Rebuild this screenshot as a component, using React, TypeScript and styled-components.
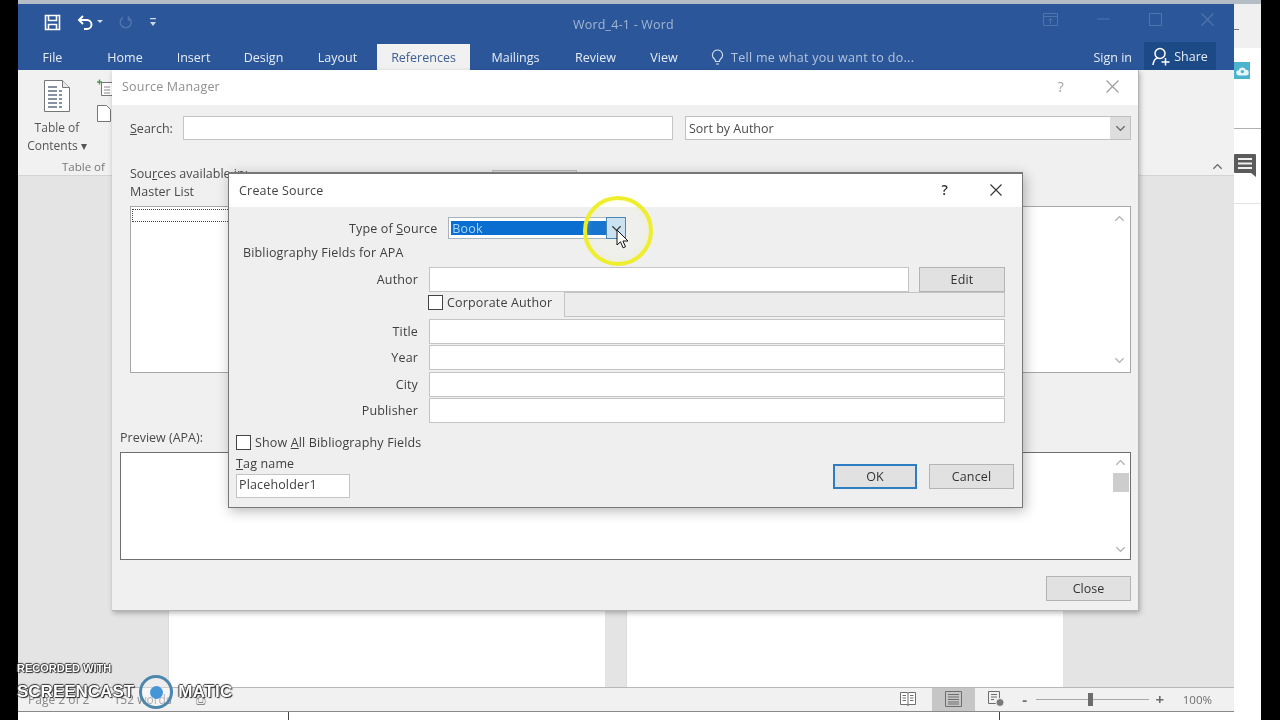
import styled, { createGlobalStyle } from 'styled-components';

const Global = createGlobalStyle`
  html, body { margin: 0; padding: 0; background: #000; }
  body { font-family: "Open Sans", "Noto Sans", sans-serif; font-size: 12.5px; color: #3a3a3a; overflow: hidden; }
`;

const Stage = styled.div`
  position: relative;
  width: 1280px;
  height: 720px;
  display: flex;
  background: #000;
  overflow: hidden;
  filter: blur(0.35px);
`;

const Screen = styled.div`
  margin-left: 18px;
  width: 1243px;
  height: 720px;
  display: flex;
  flex-direction: column;
`;

const TopEdge = styled.div`
  height: 4px;
  flex: none;
  background: #b4bcc6;
`;

const Desk = styled.div`
  flex: 1;
  display: flex;
  min-height: 0;
`;

const WordWindow = styled.div`
  width: 1216px;
  display: flex;
  flex-direction: column;
  background: #e4e4e4;
`;

const TitleBar = styled.div`
  height: 36px;
  flex: none;
  background: #2b579a;
  display: flex;
  align-items: center;
  padding: 0 0 0 26px;
  color: #a3b6d3;
`;

const Qat = styled.div`
  width: 529px;
  display: flex;
  align-items: center;
  gap: 16px;
`;

const DocTitle = styled.div`
  font-size: 12.5px;
  letter-spacing: 0.2px;
  width: 106px;
  white-space: nowrap;
  margin-top: 4px;
`;

const WinButtons = styled.div`
  margin-left: auto;
  display: flex;
  align-items: center;
  gap: 39px;
  padding-right: 20px;
  color: #4f74ac;
  margin-top: -6px;
`;

const TabBar = styled.div`
  height: 30px;
  flex: none;
  background: #2b579a;
  display: flex;
  align-items: flex-end;
  padding-left: 24px;
  color: #e6ecf5;
  font-size: 12.5px;
`;

const Tab = styled.div<{ $active?: boolean; $w: number; $gap?: number }>`
  width: ${p => p.$w}px;
  margin-left: ${p => p.$gap ?? 0}px;
  height: 26px;
  flex: none;
  display: flex;
  align-items: center;
  justify-content: center;
  white-space: nowrap;
  background: ${p => (p.$active ? '#f1f1f1' : 'transparent')};
  color: ${p => (p.$active ? '#3d5f94' : 'inherit')};
`;

const TellMe = styled.div`
  height: 26px;
  display: flex;
  align-items: center;
  gap: 7px;
  margin-left: 32px;
  color: #b4c4dc;
  letter-spacing: 0.3px;
  white-space: nowrap;
`;

const SignIn = styled.div`
  height: 26px;
  display: flex;
  align-items: center;
  margin-left: auto;
  white-space: nowrap;
`;

const ShareButton = styled.div`
  width: 72px;
  height: 28px;
  margin: 0 18px 0 12px;
  display: flex;
  align-items: center;
  justify-content: center;
  gap: 4px;
  background: #1c4a87;
  white-space: nowrap;
`;

const Ribbon = styled.div`
  height: 106px;
  flex: none;
  background: #f1f1f1;
  border-bottom: 1px solid #d4d4d4;
  display: flex;
  box-sizing: border-box;
`;

const RibbonGroup = styled.div`
  width: 94px;
  flex: none;
  display: flex;
  color: #555;
  font-size: 12px;
`;

const TocBlock = styled.div`
  width: 79px;
  flex: none;
`;

const TocColumn = styled.div`
  width: 78px;
  display: flex;
  flex-direction: column;
  align-items: center;
  padding-top: 10px;
  line-height: 18px;
  text-align: center;
  white-space: nowrap;
`;

const TocLabel = styled.div`
  margin-top: 7px;
`;

const GroupName = styled.div`
  margin: 4px 0 0 44px;
  color: #777;
  font-size: 11.5px;
  white-space: nowrap;
`;

const SmallIcons = styled.div`
  display: flex;
  flex-direction: column;
  gap: 9px;
  padding-top: 9px;
`;

const Collapse = styled.div`
  margin: auto 11px 3px auto;
  color: #666;
  display: flex;
`;

const DocArea = styled.div`
  flex: 1;
  display: flex;
  gap: 21px;
  padding-left: 150px;
  min-height: 0;
`;

const Page = styled.div`
  width: 437px;
  background: #fff;
  border-left: 1px solid #dcdcdc;
  box-sizing: border-box;
`;

const StatusBar = styled.div`
  height: 25px;
  flex: none;
  background: #f1f1f1;
  border-top: 1px solid #b8b8b8;
  border-bottom: 1px solid #8a8a8a;
  display: flex;
  align-items: center;
  padding-left: 10px;
  color: #888;
  font-size: 12px;
  box-sizing: border-box;
`;

const StatusText = styled.div`
  display: flex;
  gap: 24px;
  white-space: nowrap;
  margin-top: -1px;
`;

const ViewButtons = styled.div`
  margin-left: auto;
  display: flex;
  align-items: stretch;
  height: 100%;
  color: #6e6e6e;
`;

const ViewButton = styled.div<{ $on?: boolean; $w: number }>`
  width: ${p => p.$w}px;
  display: flex;
  align-items: center;
  justify-content: center;
  padding-bottom: 1px;
  box-sizing: border-box;
  background: ${p => (p.$on ? '#c6c6c6' : 'transparent')};
`;

const Zoom = styled.div`
  display: flex;
  align-items: center;
  gap: 6px;
  margin: -1px 22px 0 2px;
  color: #6e6e6e;
`;

const ZoomTrack = styled.div`
  position: relative;
  width: 113px;
  height: 1px;
  background: #a8a8a8;
`;

const ZoomThumb = styled.div`
  position: absolute;
  left: 52px;
  top: -6px;
  width: 5px;
  height: 13px;
  background: #6c6c6c;
`;

const ZoomSign = styled.span`
  font-size: 15px;
  font-weight: 700;
  width: 10px;
  text-align: center;
`;

const ZoomValue = styled.span`
  margin-left: 12px;
  font-size: 11.5px;
`;

const BottomStrip = styled.div`
  height: 8px;
  flex: none;
  background: #fff;
  padding-left: 270px;
`;

const PageEdge = styled.div`
  width: 712px;
  height: 100%;
  box-sizing: border-box;
  border-left: 1px solid #444;
  border-right: 1px solid #444;
`;

const RightStrip = styled.div`
  flex: 1;
  background: #fff;
  display: flex;
  flex-direction: column;
`;

const RightTop = styled.div`
  height: 44px;
  flex: none;
  background: #f0f0f0;
  display: flex;
  align-items: center;
  padding-top: 6px;
  box-sizing: border-box;
  color: #777;
`;

const Dash = styled.div`
  width: 5px;
  height: 1px;
  background: #777;
`;

const CloudBadge = styled.div`
  width: 16px;
  height: 17px;
  flex: none;
  margin-top: 14px;
  background: #4cb3cf;
  display: flex;
  align-items: center;
  justify-content: center;
`;

const RightRule = styled.div`
  height: 1px;
  flex: none;
  margin-top: 49px;
  background: #b0b0b0;
`;

const CommentIcon = styled.div`
  margin-top: 25px;
  height: 49px;
  flex: none;
  border-bottom: 1px solid #e2e2e2;
`;

/* windows lying over the document */
const SourceManager = styled.div`
  position: absolute;
  left: 112px;
  top: 70px;
  width: 1027px;
  height: 541px;
  box-sizing: border-box;
  background: #f0f0f0;
  border-right: 1px solid #b5b5b5;
  border-bottom: 1px solid #b5b5b5;
  box-shadow: 1px 2px 5px rgba(0, 0, 0, 0.28);
  display: flex;
  flex-direction: column;
`;

const DialogTitle = styled.div<{ $h: number; $lift?: number; $dim?: boolean }>`
  height: ${p => p.$h}px;
  flex: none;
  box-sizing: border-box;
  background: #fff;
  display: flex;
  align-items: center;
  padding: 0 0 ${p => p.$lift ?? 0}px 10px;
  color: ${p => (p.$dim ? '#8f8f8f' : '#444')};
  letter-spacing: 0.2px;
`;

const TitleActions = styled.div<{ $dim?: boolean }>`
  margin: ${p => (p.$dim ? '0' : '-2px')} 0 0 auto;
  display: flex;
  align-items: center;
  gap: 42px;
  padding-right: ${p => (p.$dim ? 19 : 20)}px;
  color: ${p => (p.$dim ? '#a0a0a0' : '#333')};
  font-size: 14px;
  font-weight: ${p => (p.$dim ? 400 : 600)};
`;

const SmBody = styled.div`
  flex: 1;
  display: flex;
  flex-direction: column;
  padding: 11px 7px 9px 8px;
  color: #4a4a4a;
`;

const SearchRow = styled.div`
  display: flex;
  align-items: center;
  padding-left: 10px;
  height: 24px;
`;

const SearchLabel = styled.div`
  width: 53px;
  flex: none;
`;

const TextBox = styled.div<{ $w?: number; $h?: number; $muted?: boolean }>`
  width: ${p => (p.$w ? `${p.$w}px` : 'auto')};
  height: ${p => p.$h ?? 25}px;
  flex: ${p => (p.$w ? 'none' : 1)};
  box-sizing: border-box;
  background: ${p => (p.$muted ? '#ececec' : '#fff')};
  border: 1px solid #c4c4c4;
  display: flex;
  align-items: center;
  padding-left: 2px;
  overflow: hidden;
  white-space: nowrap;
`;

const SortSelect = styled.div`
  width: 446px;
  height: 24px;
  margin-left: 12px;
  flex: none;
  box-sizing: border-box;
  background: #fff;
  border: 1px solid #c0c0c0;
  display: flex;
  align-items: center;
  justify-content: space-between;
  padding-left: 3px;
`;

const SelectArrow = styled.div`
  width: 20px;
  height: 100%;
  background: #dedede;
  display: flex;
  align-items: center;
  justify-content: center;
  color: #666;
`;

const SourcesRow = styled.div`
  display: flex;
  margin-top: 25px;
  padding-left: 10px;
  height: 41px;
`;

const SourcesLabels = styled.div`
  width: 362px;
  line-height: 18px;
  flex: none;
`;

const HiddenButton = styled.div`
  width: 85px;
  height: 22px;
  margin-top: 5px;
  background: #dedede;
  border: 1px solid #bcbcbc;
  box-sizing: border-box;
`;

const ListBox = styled.div`
  height: 167px;
  margin-left: 10px;
  box-sizing: border-box;
  background: #fff;
  border: 1px solid #a8a8a8;
  padding: 2px 1px;
  display: flex;
  justify-content: space-between;
`;

const ListItem = styled.div`
  width: 110px;
  height: 13px;
  box-sizing: border-box;
  border: 1px dotted #444;
`;

const ScrollColumn = styled.div<{ $w: number; $pad: number }>`
  width: ${p => p.$w}px;
  flex: none;
  display: flex;
  flex-direction: column;
  align-items: center;
  padding: ${p => p.$pad}px 0;
  color: #b0b0b0;
`;

const ScrollThumb = styled.div`
  width: 16px;
  height: 19px;
  margin-top: 5px;
  background: #cdcdcd;
`;

const ScrollFill = styled.div`
  flex: 1;
`;

const PreviewLabel = styled.div`
  margin-top: 56px;
  height: 23px;
`;

const PreviewBox = styled.div`
  height: 108px;
  box-sizing: border-box;
  background: #fff;
  border: 1px solid #6f6f6f;
  display: flex;
  justify-content: flex-end;
`;

const CloseRow = styled.div`
  margin-top: auto;
  display: flex;
  justify-content: flex-end;
`;

const Button = styled.div<{ $w: number; $h?: number; $primary?: boolean }>`
  width: ${p => p.$w}px;
  height: ${p => p.$h ?? 25}px;
  flex: none;
  box-sizing: border-box;
  background: #e1e1e1;
  border: ${p => (p.$primary ? '2px solid #2d7dc2' : '1px solid #b4b4b4')};
  display: flex;
  align-items: center;
  justify-content: center;
  color: #333;
`;

const CreateSource = styled.div`
  position: absolute;
  left: 228px;
  top: 172px;
  width: 795px;
  height: 336px;
  box-sizing: border-box;
  background: #efefef;
  border: 1px solid #777;
  border-top-width: 2px;
  box-shadow: 2px 3px 12px rgba(0, 0, 0, 0.28);
  display: flex;
  flex-direction: column;
  color: #3f3f3f;
  letter-spacing: 0.15px;
`;

const TypeRow = styled.div`
  height: 22px;
  margin-top: 10px;
  display: flex;
  align-items: center;
  padding-left: 120px;
`;

const TypeLabel = styled.div`
  margin-right: 11px;
`;

const TypeSelect = styled.div`
  width: 178px;
  height: 22px;
  box-sizing: border-box;
  background: #fff;
  border: 1px solid #a9b3bd;
  display: flex;
  align-items: center;
  padding-left: 2px;
`;

const TypeValue = styled.div`
  flex: 1;
  height: 14px;
  background: #0a6ed1;
  color: #a9d6f5;
  display: flex;
  align-items: center;
  padding-left: 1px;
`;

const TypeArrow = styled.div`
  width: 20px;
  height: 22px;
  flex: none;
  margin-right: -1px;
  box-sizing: border-box;
  background: #c9e2f5;
  border: 1px solid #3d82b8;
  display: flex;
  align-items: center;
  justify-content: center;
  color: #333;
`;

const FieldsTitle = styled.div`
  margin: 5px 0 0 14px;
  height: 23px;
  line-height: 18px;
`;

const FieldsGrid = styled.div`
  display: grid;
  grid-template-columns: 187px 480px 10px 86px;
  grid-auto-rows: 24px;
  row-gap: 2.3px;
  margin-left: 13px;
  width: 763px;
  padding-bottom: 6px;
  align-items: center;
`;

const FieldLabel = styled.div`
  text-align: right;
  padding-right: 11px;
`;

const WideCell = styled.div`
  grid-column: 2 / 5;
  display: flex;
  align-items: center;
`;

const CorporateRow = styled(WideCell)`
  height: 24px;
  margin-top: -2px;
`;

const Checkbox = styled.div`
  width: 15px;
  height: 15px;
  flex: none;
  box-sizing: border-box;
  background: #fff;
  border: 1px solid #444;
`;

const CheckText = styled.div`
  margin-left: 4px;
  white-space: nowrap;
`;

const CorporateCheck = styled(Checkbox)`
  margin: -3px 0 0 -1px;
`;

const CorporateText = styled(CheckText)`
  width: 117px;
  flex: none;
  margin-top: -3px;
`;

const ShowAllRow = styled.div`
  display: flex;
  align-items: center;
  margin: 6px 0 0 7px;
  height: 16px;
`;

const DialogFoot = styled.div`
  display: flex;
  margin: 5px 8px 0 7px;
`;

const TagColumn = styled.div`
  width: 114px;
  line-height: 18px;
  flex: none;
`;

const TagBox = styled(TextBox)`
  margin-top: 1px;
  padding-bottom: 2px;
`;

const FootButtons = styled.div`
  margin-left: auto;
  display: flex;
  gap: 12px;
  padding-top: 9px;
`;

const Highlight = styled.div`
  position: absolute;
  left: 583px;
  top: 196px;
  width: 70px;
  height: 70px;
  box-sizing: border-box;
  border-radius: 50%;
  border: 4px solid #eeee2c;
  background: rgba(250, 250, 170, 0.05);
  box-shadow: inset 0 0 5px rgba(245, 245, 120, 0.3);
  pointer-events: none;
`;

const Pointer = styled.svg`
  position: absolute;
  left: 616px;
  top: 229px;
`;

const Watermark = styled.div`
  position: absolute;
  left: 17px;
  top: 660px;
  color: #fff;
  font-family: "Liberation Sans", sans-serif;
  font-weight: 700;
  text-shadow: 1px 1px 1px #222, -1px 0 1px #333, 0 -1px 1px #333;
`;

const WatermarkSmall = styled.div`
  font-size: 11px;
  line-height: 16px;
`;

const WatermarkBig = styled.div`
  display: flex;
  align-items: center;
  font-size: 17px;
  height: 34px;
  margin-top: -1px;
`;

const RecordDot = styled.div`
  width: 34px;
  height: 34px;
  box-sizing: border-box;
  margin: 0 5px 0 5px;
  border-radius: 50%;
  border: 3px solid #4d86ad;
  background: rgba(255, 255, 255, 0.35);
  display: flex;
  align-items: center;
  justify-content: center;
`;

const RecordCore = styled.div`
  width: 13px;
  height: 13px;
  border-radius: 50%;
  background: #4596d8;
`;

const MaticText = styled.span`
  letter-spacing: 0.4px;
`;

const Chevron = ({ up, size = 11 }: { up?: boolean; size?: number }) => (
  <svg width={size} height={size} viewBox="0 0 12 12" fill="none" stroke="currentColor" strokeWidth="1.4">
    <path d={up ? 'M1.5 8.5 6 4l4.5 4.5' : 'M1.5 3.5 6 8l4.5-4.5'} />
  </svg>
);

const CrossIcon = ({ size = 12 }: { size?: number }) => (
  <svg width={size} height={size} viewBox="0 0 12 12" fill="none" stroke="currentColor" strokeWidth="1.1">
    <path d="M.5.5l11 11M11.5.5l-11 11" />
  </svg>
);

const SaveIcon = () => (
  <svg width="17" height="17" viewBox="0 0 17 17" fill="none" stroke="#fff" strokeWidth="1.6">
    <path d="M1.5 1.5h14v14h-14z" />
    <path d="M4.5 1.5v5h8v-5M4.5 15.5v-5h8v5" />
  </svg>
);

const UndoIcon = () => (
  <svg width="26" height="16" viewBox="0 0 26 16" fill="none">
    <path d="M6 2 2 6l4 4" stroke="#fff" strokeWidth="1.9" />
    <path d="M2.5 6H10a4.3 4.3 0 0 1 0 9H7" stroke="#fff" strokeWidth="1.9" />
    <path d="M20 6h6l-3 3z" fill="#d5deec" />
  </svg>
);

const RedoIcon = () => (
  <svg width="14" height="15" viewBox="0 0 14 15" fill="none" stroke="#4f74ac" strokeWidth="1.5">
    <path d="M9.5 2.5a5.5 5.5 0 1 1-5.5 0M9.5 1v4h3" />
  </svg>
);

const CustomizeIcon = () => (
  <svg width="8" height="10" viewBox="0 0 8 10" fill="#cdd8e8">
    <path d="M1 1h6v1.3H1zM1 5h6L4 9z" />
  </svg>
);

const BulbIcon = () => (
  <svg width="13" height="17" viewBox="0 0 13 17" fill="none" stroke="#d5deec" strokeWidth="1.1">
    <path d="M6.5 1a5 5 0 0 0-3 9c.7.7 1 1.5 1 2.5h4c0-1 .3-1.8 1-2.5a5 5 0 0 0-3-9zM5 15h3" />
  </svg>
);

const ShareIcon = () => (
  <svg width="18" height="19" viewBox="0 0 18 19" fill="none" stroke="#fff" strokeWidth="1.5">
    <circle cx="8" cy="6.5" r="5" />
    <path d="M1 18c.5-4 2.5-6.6 5-7.2M13.5 11v7.5M9.5 15h8" />
  </svg>
);

const WindowGlyph = () => (
  <svg width="15" height="13" viewBox="0 0 15 13" fill="none" stroke="currentColor">
    <path d="M.5.5h14v12H.5zM.5 3.5h14M7.5 5.5v5M5.5 7.5l2-2 2 2" />
  </svg>
);

const MinGlyph = () => (
  <svg width="13" height="2" viewBox="0 0 13 2"><path d="M0 1h13" stroke="currentColor" /></svg>
);

const MaxGlyph = () => (
  <svg width="13" height="13" viewBox="0 0 13 13" fill="none" stroke="currentColor"><path d="M.5.5h12v12H.5z" /></svg>
);

const TocIcon = () => (
  <svg width="26" height="32" viewBox="0 0 26 32" fill="#fff" stroke="#777">
    <path d="M.5.5h18l7 7v24H.5z" />
    <path d="M18.5.5v7h7" fill="#e8e8e8" />
    <path d="M4 7h11M4 11h14M4 15h14M4 19h14M4 23h14M4 27h14" stroke="#5f6f86" strokeWidth="1.4" strokeDasharray="9 2 3 0" />
  </svg>
);

const AddTextIcon = () => (
  <svg width="16" height="17" viewBox="0 0 16 17" fill="#fff" stroke="#777">
    <path d="M4.5 3.5h11v13h-11z" />
    <path d="M0 3h5M2.5.5v5" stroke="#4e9a4e" strokeWidth="1.4" />
    <path d="M7 8h6M7 11h6M7 14h6" stroke="#888" />
  </svg>
);

const UpdateIcon = () => (
  <svg width="14" height="17" viewBox="0 0 14 17" fill="#fff" stroke="#777">
    <path d="M.5.5h9l4 4v12H.5z" />
  </svg>
);

const CloudIcon = () => (
  <svg width="13" height="10" viewBox="0 0 13 10" fill="#e8f6fa">
    <path d="M3 9.5a2.6 2.6 0 0 1-.3-5.2 3.7 3.7 0 0 1 7-.6 2.9 2.9 0 0 1 .3 5.8z" />
    <circle cx="6.4" cy="5.6" r="1.7" fill="#4cb3cf" />
  </svg>
);

const CommentGlyph = () => (
  <svg width="22" height="23" viewBox="0 0 22 23">
    <path d="M1 0h20a1 1 0 0 1 1 1v22l-5-4H1a1 1 0 0 1-1-1V1a1 1 0 0 1 1-1z" fill="#5b5b5b" />
    <path d="M4 5h14M4 9.5h14M4 14h14" stroke="#f0f0f0" strokeWidth="2" />
  </svg>
);

const ReadIcon = () => (
  <svg width="16" height="16" viewBox="0 0 16 16" fill="#fff" stroke="currentColor">
    <path d="M.5 1.5h7l.5.7.5-.7h7v12h-7l-.5.7-.5-.7h-7z" />
    <path d="M8 2v13M2.5 4.5h3.5M2.5 7h3.5M2.5 9.5h3.5M10 4.5h3.5M10 7h3.5M10 9.5h3.5" fill="none" />
  </svg>
);

const PrintIcon = () => (
  <svg width="17" height="16" viewBox="0 0 17 16" fill="none" stroke="currentColor">
    <path d="M.5.5h16v15H.5z" />
    <path d="M3 3.5h11M3 6h11M3 8.5h11M3 11h11M3 13h11" />
  </svg>
);

const WebIcon = () => (
  <svg width="17" height="16" viewBox="0 0 17 16" fill="none" stroke="currentColor">
    <path d="M.5.5h11v12H.5zM3 3.5h6M3 6h6M3 8.5h3" />
    <circle cx="12" cy="11.5" r="4" fill="#7a7a7a" stroke="#f1f1f1" />
  </svg>
);

const App = () => {
  return (
    <Stage>
      <Global />
      <Screen>
        <TopEdge />
        <Desk>
          <WordWindow>
            <TitleBar>
              <Qat>
                <SaveIcon />
                <UndoIcon />
                <RedoIcon />
                <CustomizeIcon />
              </Qat>
              <DocTitle>Word_4-1 - Word</DocTitle>
              <WinButtons>
                <WindowGlyph />
                <MinGlyph />
                <MaxGlyph />
                <CrossIcon size={13} />
              </WinButtons>
            </TitleBar>
            <TabBar>
              <Tab $w={21}>File</Tab>
              <Tab $w={38} $gap={43}>Home</Tab>
              <Tab $w={33} $gap={33}>Insert</Tab>
              <Tab $w={41} $gap={33}>Design</Tab>
              <Tab $w={41} $gap={33}>Layout</Tab>
              <Tab $w={93} $gap={19} $active>References</Tab>
              <Tab $w={51} $gap={20}>Mailings</Tab>
              <Tab $w={43} $gap={33}>Review</Tab>
              <Tab $w={30} $gap={32}>View</Tab>
              <TellMe>
                <BulbIcon />
                Tell me what you want to do...
              </TellMe>
              <SignIn>Sign in</SignIn>
              <ShareButton>
                <ShareIcon />
                Share
              </ShareButton>
            </TabBar>
            <Ribbon>
              <RibbonGroup>
                <TocBlock>
                  <TocColumn>
                    <TocIcon />
                    <TocLabel>
                      Table of
                      <br />
                      Contents ▾
                    </TocLabel>
                  </TocColumn>
                  <GroupName>Table of</GroupName>
                </TocBlock>
                <SmallIcons>
                  <AddTextIcon />
                  <UpdateIcon />
                </SmallIcons>
              </RibbonGroup>
              <Collapse>
                <Chevron up />
              </Collapse>
            </Ribbon>
            <DocArea>
              <Page />
              <Page />
            </DocArea>
            <StatusBar>
              <StatusText>
                <span>Page 2 of 2</span>
                <span>152 words</span>
                <span>⎙</span>
              </StatusText>
              <ViewButtons>
                <ViewButton $w={48}><ReadIcon /></ViewButton>
                <ViewButton $w={43} $on><PrintIcon /></ViewButton>
                <ViewButton $w={43}><WebIcon /></ViewButton>
                <Zoom>
                  <ZoomSign>-</ZoomSign>
                  <ZoomTrack><ZoomThumb /></ZoomTrack>
                  <ZoomSign>+</ZoomSign>
                  <ZoomValue>100%</ZoomValue>
                </Zoom>
              </ViewButtons>
            </StatusBar>
            <BottomStrip>
              <PageEdge />
            </BottomStrip>
          </WordWindow>
          <RightStrip>
            <RightTop><Dash /></RightTop>
            <CloudBadge><CloudIcon /></CloudBadge>
            <RightRule />
            <CommentIcon><CommentGlyph /></CommentIcon>
          </RightStrip>
        </Desk>
      </Screen>

      <SourceManager>
        <DialogTitle $h={35} $lift={2} $dim>
          Source Manager
          <TitleActions $dim>
            <span>?</span>
            <CrossIcon size={13} />
          </TitleActions>
        </DialogTitle>
        <SmBody>
          <SearchRow>
            <SearchLabel><u>S</u>earch:</SearchLabel>
            <TextBox $w={490} $h={24} />
            <SortSelect>
              Sort by Author
              <SelectArrow><Chevron /></SelectArrow>
            </SortSelect>
          </SearchRow>
          <SourcesRow>
            <SourcesLabels>
              Sou<u>r</u>ces available in:
              <br />
              Master List
            </SourcesLabels>
            <HiddenButton />
          </SourcesRow>
          <ListBox>
            <ListItem />
            <ScrollColumn $w={20} $pad={4}>
              <Chevron up />
              <ScrollFill />
              <Chevron />
            </ScrollColumn>
          </ListBox>
          <PreviewLabel>Preview (APA):</PreviewLabel>
          <PreviewBox>
            <ScrollColumn $w={19} $pad={4}>
              <Chevron up />
              <ScrollThumb />
              <ScrollFill />
              <Chevron />
            </ScrollColumn>
          </PreviewBox>
          <CloseRow>
            <Button $w={85}>Close</Button>
          </CloseRow>
        </SmBody>
      </SourceManager>

      <CreateSource>
        <DialogTitle $h={33}>
          Create Source
          <TitleActions>
            <span>?</span>
            <CrossIcon size={12} />
          </TitleActions>
        </DialogTitle>
        <TypeRow>
          <TypeLabel>Type of <u>S</u>ource</TypeLabel>
          <TypeSelect>
            <TypeValue>Book</TypeValue>
            <TypeArrow><Chevron /></TypeArrow>
          </TypeSelect>
        </TypeRow>
        <FieldsTitle>Bibliography Fields for APA</FieldsTitle>
        <FieldsGrid>
          <FieldLabel>Author</FieldLabel>
          <TextBox $w={480} />
          <span />
          <Button $w={86}>Edit</Button>
          <span />
          <CorporateRow>
            <CorporateCheck />
            <CorporateText>Corporate Author</CorporateText>
            <TextBox $muted />
          </CorporateRow>
          <FieldLabel>Title</FieldLabel>
          <WideCell><TextBox /></WideCell>
          <FieldLabel>Year</FieldLabel>
          <WideCell><TextBox /></WideCell>
          <FieldLabel>City</FieldLabel>
          <WideCell><TextBox /></WideCell>
          <FieldLabel>Publisher</FieldLabel>
          <WideCell><TextBox /></WideCell>
        </FieldsGrid>
        <ShowAllRow>
          <Checkbox />
          <CheckText>Show <u>A</u>ll Bibliography Fields</CheckText>
        </ShowAllRow>
        <DialogFoot>
          <TagColumn>
            <u>T</u>ag name
            <TagBox $w={114} $h={24}>Placeholder1</TagBox>
          </TagColumn>
          <FootButtons>
            <Button $w={84} $primary>OK</Button>
            <Button $w={85}>Cancel</Button>
          </FootButtons>
        </DialogFoot>
      </CreateSource>

      <Highlight />
      <Pointer width="13" height="20" viewBox="0 0 13 20">
        <path d="M1 1v15l3.5-3.2 2.6 6 2.4-1-2.6-5.8H12z" fill="#fff" stroke="#111" strokeWidth="1" />
      </Pointer>

      <Watermark>
        <WatermarkSmall>RECORDED WITH</WatermarkSmall>
        <WatermarkBig>
          SCREENCAST
          <RecordDot><RecordCore /></RecordDot>
          <MaticText>MATIC</MaticText>
        </WatermarkBig>
      </Watermark>
    </Stage>
  );
};

export default App;
